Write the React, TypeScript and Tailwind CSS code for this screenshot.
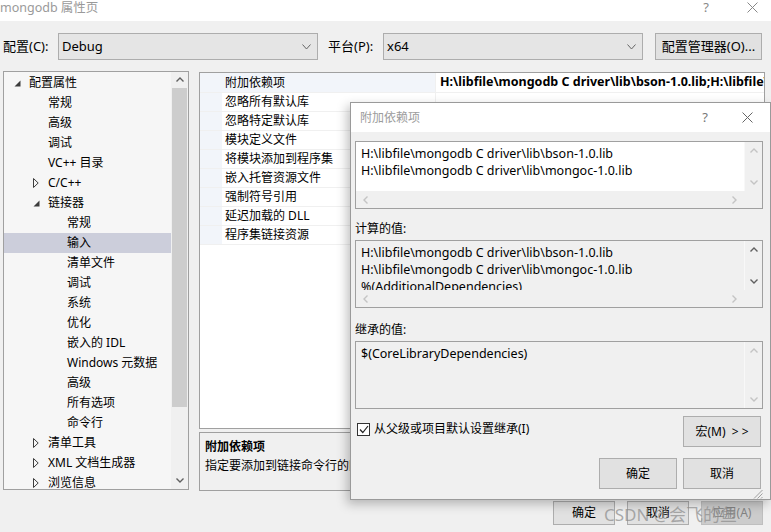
const F = "font-['Noto_Sans','Noto_Sans_CJK_SC',sans-serif]"

type Dir = "up" | "down" | "left" | "right"

function Chev({ dir, color = "#606060" }: { dir: Dir; color?: string }) {
  const d = {
    up: "M1.5 6.5 L5 3 L8.5 6.5",
    down: "M1.5 3.5 L5 7 L8.5 3.5",
    left: "M6.5 1.5 L3 5 L6.5 8.5",
    right: "M3.5 1.5 L7 5 L3.5 8.5",
  }[dir]
  return (
    <svg width="10" height="10" viewBox="0 0 10 10" fill="none" stroke={color} strokeWidth="1.4">
      <path d={d} />
    </svg>
  )
}

function CloseX({ color = "#555" }: { color?: string }) {
  return (
    <svg width="11" height="11" viewBox="0 0 11 11" stroke={color} strokeWidth="1">
      <path d="M0.5 0.5 L10.5 10.5 M10.5 0.5 L0.5 10.5" />
    </svg>
  )
}

function Expander({ kind }: { kind: "open" | "closed" | null }) {
  if (kind === "open")
    return (
      <svg width="7" height="7" viewBox="0 0 7 7">
        <path d="M6.5 0.5 L6.5 6.5 L0.5 6.5 Z" fill="#3c3c3c" />
      </svg>
    )
  if (kind === "closed")
    return (
      <svg width="6" height="10" viewBox="0 0 6 10">
        <path d="M0.5 0.5 L5.2 5 L0.5 9.5 Z" fill="none" stroke="#3c3c3c" strokeWidth="1" />
      </svg>
    )
  return null
}

const treeItems: [string, number, "open" | "closed" | null][] = [
  ["配置属性", 0, "open"],
  ["常规", 1, null],
  ["高级", 1, null],
  ["调试", 1, null],
  ["VC++ 目录", 1, null],
  ["C/C++", 1, "closed"],
  ["链接器", 1, "open"],
  ["常规", 2, null],
  ["输入", 2, null],
  ["清单文件", 2, null],
  ["调试", 2, null],
  ["系统", 2, null],
  ["优化", 2, null],
  ["嵌入的 IDL", 2, null],
  ["Windows 元数据", 2, null],
  ["高级", 2, null],
  ["所有选项", 2, null],
  ["命令行", 2, null],
  ["清单工具", 1, "closed"],
  ["XML 文档生成器", 1, "closed"],
  ["浏览信息", 1, "closed"],
]

const indent = ["pl-[6px]", "pl-[25px]", "pl-[44px]"]

const props = [
  "附加依赖项",
  "忽略所有默认库",
  "忽略特定默认库",
  "模块定义文件",
  "将模块添加到程序集",
  "嵌入托管资源文件",
  "强制符号引用",
  "延迟加载的 DLL",
  "程序集链接资源",
]

const LIB1 = "H:\\libfile\\mongodb C driver\\lib\\bson-1.0.lib"
const LIB2 = "H:\\libfile\\mongodb C driver\\lib\\mongoc-1.0.lib"

function Combo({ value }: { value: string }) {
  return (
    <div className="flex h-[27px] w-[260px] items-center justify-between border border-[#adadad] bg-[#e5e5e5] pl-[3px] pr-[6px]">
      <span className="text-[13px]">{value}</span>
      <svg width="9" height="6" viewBox="0 0 9 6" fill="none" stroke="#666" strokeWidth="1">
        <path d="M0.5 0.5 L4.5 5 L8.5 0.5" />
      </svg>
    </div>
  )
}

function WinButton({ label, className = "", disabled = false }: { label: string; className?: string; disabled?: boolean }) {
  return (
    <div
      className={`flex items-center justify-center whitespace-pre border text-[12px] ${
        disabled ? "border-[#bfbfbf] bg-[#cccccc] text-[#838383]" : "border-[#adadad] bg-[#e1e1e1] text-black"
      } ${className}`}
    >
      {label}
    </div>
  )
}

function EditBox({
  lines,
  white,
  hscroll,
  active,
}: {
  lines: string[]
  white?: boolean
  hscroll?: boolean
  active?: boolean
}) {
  const arrow = active ? "#606060" : "#c4c4c4"
  return (
    <div className="flex h-[68px] flex-col border border-[#a0a0a0]">
      <div className="flex min-h-0 flex-1">
        <div
          className={`min-w-0 flex-1 overflow-hidden pl-[5px] pt-[3px] text-[12.5px] leading-[17px] ${
            white ? "bg-white" : "bg-[#f0f0f0]"
          }`}
        >
          {lines.map((l) => (
            <div key={l} className="whitespace-nowrap">
              {l}
            </div>
          ))}
        </div>
        <div className="flex w-[18px] flex-col items-center justify-between border-l border-[#f8f8f8] bg-[#f0f0f0] py-[4px]">
          <Chev dir="up" color={arrow} />
          <Chev dir="down" color={arrow} />
        </div>
      </div>
      {hscroll && (
        <div className="flex h-[17px]">
          <div className="flex flex-1 items-center justify-between bg-[#f0f0f0] px-[5px]">
            <Chev dir="left" color="#c4c4c4" />
            <Chev dir="right" color="#c4c4c4" />
          </div>
          <div className="w-[18px] bg-[#f0f0f0]" />
        </div>
      )}
    </div>
  )
}

function Dialog() {
  return (
    <div className="absolute left-[350px] top-[102px] flex h-[398px] w-[421px] flex-col border border-[#9a9a9a] bg-[#f0f0f0] shadow-[-3px_4px_10px_rgba(0,0,0,0.25)]">
      <div className="flex h-[31px] items-center bg-white pl-[9px] pr-[17px]">
        <span className="flex-1 text-[12px] text-[#9c9c9c]">附加依赖项</span>
        <span className="mr-[34px] text-[13px] text-[#777]">?</span>
        <CloseX color="#666" />
      </div>
      <div className="flex flex-1 flex-col pl-[4px] pr-[7px] pt-[9px]">
        <EditBox lines={[LIB1, LIB2]} white hscroll />
        <div className="mt-[11px] h-[17px] leading-[17px]">计算的值:</div>
        <div className="mt-[3px]">
          <EditBox lines={[LIB1, LIB2, "%(AdditionalDependencies)"]} hscroll active />
        </div>
        <div className="mt-[13px] h-[17px] leading-[17px]">继承的值:</div>
        <div className="mt-[3px]">
          <EditBox lines={["$(CoreLibraryDependencies)"]} />
        </div>
        <div className="mt-[7px] flex h-[31px] items-start justify-between pr-[2px]">
          <div className="flex items-center gap-[4px] pl-[2px] pt-[4px]">
            <div className="flex h-[13px] w-[13px] items-center justify-center border border-[#333] bg-white">
              <svg width="10" height="9" viewBox="0 0 10 9" fill="none" stroke="#222" strokeWidth="1.2">
                <path d="M1 4.5 L3.8 7.5 L9 1" />
              </svg>
            </div>
            <span>从父级或项目默认设置继承(I)</span>
          </div>
          <WinButton label="宏(M)  > >" className="h-[31px] w-[78px]" />
        </div>
        <div className="mt-[11px] flex justify-end gap-[6px] pr-[2px]">
          <WinButton label="确定" className="h-[31px] w-[78px]" />
          <WinButton label="取消" className="h-[31px] w-[78px]" />
        </div>
        <div className="flex flex-1 items-end justify-end">
          <svg width="10" height="10" viewBox="0 0 10 10" stroke="#a0a0a0" strokeWidth="1">
            <path d="M9.5 1 L1 9.5 M9.5 4.5 L4.5 9.5 M9.5 8 L8 9.5" />
          </svg>
        </div>
      </div>
    </div>
  )
}

export default function App() {
  return (
    <div className={`relative h-[532px] w-[771px] overflow-hidden bg-[#f0f0f0] text-[12px] text-black ${F}`}>
      {/* title bar */}
      <div className="flex h-[21px] items-start bg-white pr-[13px]">
        <span className="flex-1 text-[12.5px] leading-[15px] text-[#9a9a9a]">mongodb 属性页</span>
        <span className="mr-[38px] text-[13px] leading-[15px] text-[#888]">?</span>
        <div className="pt-[2px]">
          <CloseX color="#888" />
        </div>
      </div>

      {/* config toolbar */}
      <div className="mt-[12px] flex h-[27px] items-center">
        <span className="w-[58px] pl-[3px] text-[13px]">配置(C):</span>
        <Combo value="Debug" />
        <span className="ml-[10px] w-[55px] text-[13px]">平台(P):</span>
        <Combo value="x64" />
        <WinButton label="配置管理器(O)..." className="ml-[12px] h-[27px] w-[107px] text-[13px]" />
      </div>

      {/* main area */}
      <div className="mt-[11px] flex pl-[3px]">
        {/* tree */}
        <div className="flex h-[419px] w-[186px] border border-[#a0a0a0] bg-[#f6f6f6]">
          <div className="flex-1 overflow-hidden pt-[1px]">
            {treeItems.map(([label, level, exp], i) => (
              <div
                key={i}
                className={`flex h-[20px] items-center ${indent[level]} ${label === "输入" && level === 2 ? "bg-[#cccedb]" : ""}`}
              >
                <div className="flex w-[19px] items-center pl-[4px]">
                  <Expander kind={exp} />
                </div>
                <span className="whitespace-nowrap">{label}</span>
              </div>
            ))}
          </div>
          <div className="flex w-[17px] flex-col bg-[#f0f0f0]">
            <div className="flex h-[16px] items-center justify-center">
              <Chev dir="up" />
            </div>
            <div className="mx-[1px] h-[319px] bg-[#cdcdcd]" />
            <div className="flex flex-1 items-end justify-center pb-[4px]">
              <Chev dir="down" />
            </div>
          </div>
        </div>

        {/* property grid + description */}
        <div className="ml-[10px] flex w-[566px] flex-col">
          <div className="mt-[1px] h-[357px] overflow-hidden border border-[#a0a0a0] bg-white">
            {props.map((p, i) => (
              <div key={p} className={`flex border-b border-[#f0f0f0] ${i === 0 ? "h-[20px]" : "h-[19px]"}`}>
                <div className="w-[22px] bg-[#f2f5fa]" />
                <div className={`flex w-[214px] items-center border-r border-[#f0f0f0] pl-[3px] ${i === 0 ? "bg-[#f2f5fa]" : ""}`}>
                  {p}
                </div>
                <div className="flex min-w-0 flex-1 items-center overflow-hidden whitespace-nowrap pl-[4px] text-[12.5px] font-bold">
                  {i === 0 ? `${LIB1};${LIB2};%(AdditionalDependencies)` : ""}
                </div>
              </div>
            ))}
          </div>
          <div className="mt-[3px] h-[59px] border border-[#a0a0a0] px-[5px] pt-[4px] leading-[19px]">
            <div className="font-bold">附加依赖项</div>
            <div className="whitespace-nowrap">指定要添加到链接命令行的附加项。[例如 kernel32.lib]</div>
          </div>
        </div>
      </div>

      {/* bottom buttons */}
      <div className="mt-[10px] flex justify-end gap-[12px] pr-[8px]">
        <WinButton label="确定" className="h-[24px] w-[62px]" />
        <WinButton label="取消" className="h-[24px] w-[62px]" />
        <WinButton label="应用(A)" className="h-[24px] w-[62px]" disabled />
      </div>

      <Dialog />

      {/* watermark */}
      <div className="pointer-events-none absolute left-[604px] top-[502px] whitespace-nowrap text-[17px] text-[#8a8a8a]/70">
        CSDN @会飞的鱼
      </div>
    </div>
  )
}
